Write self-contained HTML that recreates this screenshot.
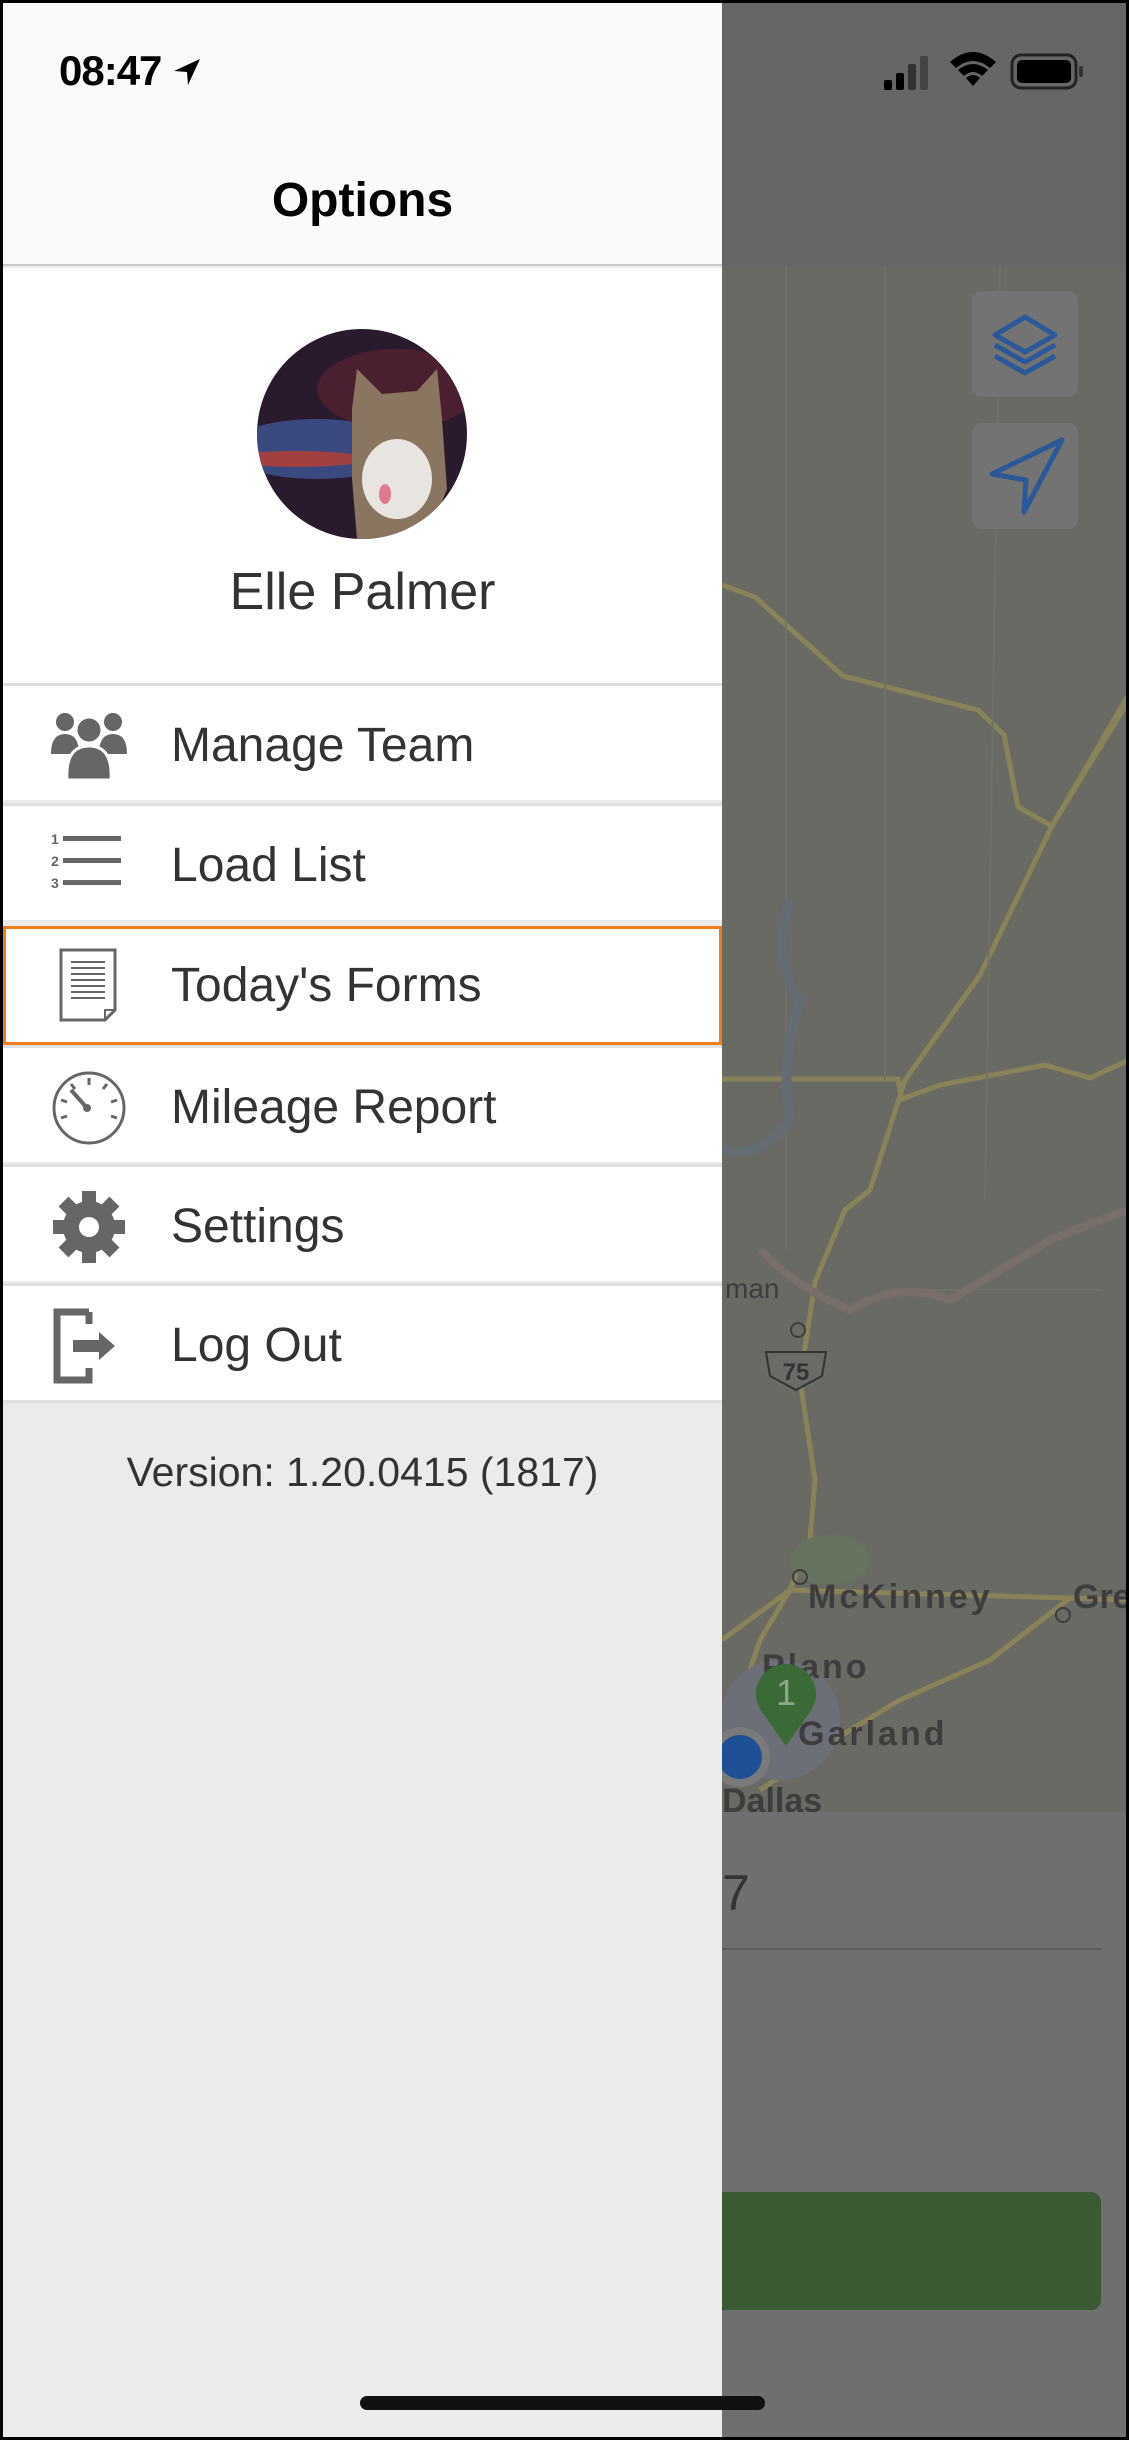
<!DOCTYPE html>
<html><head><meta charset="utf-8"><style>
*{margin:0;padding:0;box-sizing:border-box}
html,body{width:1129px;height:2440px;overflow:hidden;background:#000}
body{font-family:"Liberation Sans",sans-serif;position:relative}
.frame{position:absolute;left:3px;top:3px;width:1123px;height:2434px;overflow:hidden;background:#696a64}
.map{position:absolute;left:0;top:0;width:1126px;height:2440px}
.drawer{position:absolute;left:0;top:0;width:719px;height:2440px;background:#ebebeb}
.hdr{position:absolute;left:0;top:0;width:719px;height:263px;background:#fafafa;border-bottom:2px solid #c8c8c8}
.time{position:absolute;left:56px;top:44px;font-size:42px;font-weight:bold;color:#000;letter-spacing:-1px}
.title{position:absolute;left:0;width:719px;top:170px;text-align:center;font-size:48px;font-weight:bold;color:#000}
.prof{position:absolute;left:0;top:265px;width:719px;height:415px;background:#fff}
.name{position:absolute;left:0;width:719px;top:294px;text-align:center;font-size:52px;color:#333}
.row{position:absolute;left:0;width:719px;height:117px;background:#fff;border-top:3px solid #e0e0e0}
.row .t{position:absolute;left:168px;top:32px;font-size:48px;color:#333}
.row svg{position:absolute;left:46px;top:22px}
.sel{border:3px solid #f07d1e}
.ver{position:absolute;left:0;width:719px;top:1446px;text-align:center;font-size:41px;color:#333}
</style></head><body><div class="frame">
<svg class="map" viewBox="0 0 1126 2440" style="left:-3px;top:-3px">
<rect x="0" y="0" width="1126" height="266" fill="#666"/>
<g fill="none" stroke="#8a8258" stroke-width="5">
<path d="M722 585 L755 597 L843 676 L978 710 L1004 735 L1018 807 L1052 826 L1129 694"/>
<path d="M1129 700 L1052 826 L980 975 L905 1080 L870 1190 L845 1210 L815 1282 L800 1380 L815 1480 L810 1540 L790 1590 L760 1640 L740 1700"/>
<path d="M722 1079 L898 1079 L902 1099 L940 1085 L1045 1065 L1090 1078 L1129 1060"/>
<path d="M722 1640 L790 1590 L1070 1598 L1129 1600"/>
<path d="M1070 1598 L990 1660 L900 1700 L850 1730 L760 1790"/>
</g>
<g fill="none" stroke="#6f7168" stroke-width="2">
<path d="M786 266 L786 1250"/><path d="M885 266 L885 1080"/><path d="M1000 266 L985 1200"/>
<path d="M920 1290 L1100 1290"/>
</g>
<path d="M760 1250 Q800 1290 850 1310 Q900 1280 950 1300 Q1000 1270 1050 1240 Q1100 1220 1129 1210" fill="none" stroke="#7a6e6a" stroke-width="8"/>
<path d="M722 1150 Q760 1160 790 1120 Q780 1060 800 1000 Q770 960 790 900" fill="none" stroke="#646c74" stroke-width="10"/>
<ellipse cx="830" cy="1560" rx="40" ry="25" fill="#66735e"/>
<ellipse cx="780" cy="1720" rx="60" ry="60" fill="#6c6f78"/>
<g font-family="Liberation Sans" font-weight="bold" fill="#3d3d3d" font-size="34">
<text x="725" y="1298" font-size="28" font-weight="normal">man</text>
<text x="808" y="1608" letter-spacing="3">McKinney</text>
<text x="1073" y="1608">Gre</text>
<text x="762" y="1678" letter-spacing="3">Plano</text>
<text x="798" y="1745" letter-spacing="3">Garland</text>
<text x="722" y="1812">Dallas</text>
</g>
<circle cx="798" cy="1330" r="7" fill="none" stroke="#3d3d3d" stroke-width="2"/>
<circle cx="800" cy="1577" r="7" fill="none" stroke="#3d3d3d" stroke-width="2"/>
<circle cx="1063" cy="1615" r="7" fill="none" stroke="#3d3d3d" stroke-width="2"/>
<path d="M766 1352 h60 l-4 24 l-26 14 l-26-14 z" fill="#6a6a66" stroke="#333" stroke-width="2"/>
<text x="796" y="1380" text-anchor="middle" font-family="Liberation Sans" font-weight="bold" font-size="24" fill="#333">75</text>
<path d="M786 1746 L762 1712 A30 30 0 1 1 810 1712 Z" fill="#3a6a36"/>
<text x="786" y="1705" text-anchor="middle" font-family="Liberation Sans" font-size="36" fill="#8da88a">1</text>
<circle cx="740" cy="1757" r="30" fill="#7a7a7a"/><circle cx="740" cy="1757" r="22" fill="#1f4f94"/>
<rect x="722" y="1812" width="404" height="630" fill="#6f6f6f"/>
<text x="722" y="1910" font-family="Liberation Sans" font-size="50" fill="#333">7</text>
<rect x="722" y="1948" width="380" height="2" fill="#5c5c5c"/>
<rect x="700" y="2192" width="401" height="118" rx="10" fill="#3a5a34"/>
<rect x="972" y="291" width="106" height="106" rx="10" fill="#737373"/>
<rect x="972" y="423" width="106" height="106" rx="10" fill="#737373"/>
<g fill="none" stroke="#2b5899" stroke-width="5" stroke-linejoin="round">
<path d="M1025 317 L1055 335 L1025 352 L995 335 Z"/><path d="M995 345 L1025 362 L1055 345"/><path d="M995 356 L1025 373 L1055 356"/>
<path d="M1062 440 L992 474 L1026 480 L1024 512 Z"/>
</g>
<g fill="#000">
<rect x="884" y="80" width="8" height="10" rx="2"/><rect x="896" y="73" width="8" height="17" rx="2"/>
<rect x="908" y="64" width="8" height="26" rx="2" fill="#333"/><rect x="920" y="56" width="8" height="34" rx="2" fill="#444"/>
<path d="M950 62 Q973 42 996 62 L990 68 Q973 54 956 68 Z M958 70 Q973 58 988 70 L982 76 Q973 68 964 76 Z M966 78 Q973 72 980 78 L973 86 Z"/>
<rect x="1012" y="55" width="64" height="33" rx="9" fill="none" stroke="#222" stroke-width="3"/>
<rect x="1017" y="60" width="54" height="23" rx="5"/><rect x="1079" y="66" width="4" height="11" rx="2" fill="#333"/>
</g>
</svg>
<div class="drawer">
<div class="hdr">
<div class="time">08:47 <svg width="30" height="30" viewBox="0 0 30 30" style="vertical-align:-2px"><path d="M28 2 L2 14 L15 15 L16 28 Z" fill="#000"/></svg></div>
<div class="title">Options</div>
</div>
<div class="prof">
<svg style="position:absolute;left:254px;top:61px" width="210" height="210" viewBox="0 0 210 210">
<defs><clipPath id="c"><circle cx="105" cy="105" r="105"/></clipPath></defs>
<g clip-path="url(#c)">
<rect width="210" height="210" fill="#2a1a2e"/>
<ellipse cx="60" cy="120" rx="90" ry="30" fill="#3a4a80"/>
<ellipse cx="40" cy="130" rx="70" ry="8" fill="#a04040"/>
<ellipse cx="140" cy="60" rx="80" ry="40" fill="#4a2030"/>
<path d="M95 80 L100 40 L125 65 L160 62 L180 40 L185 90 L190 160 L170 210 L100 210 L95 150 Z" fill="#8a7560"/>
<ellipse cx="140" cy="150" rx="35" ry="40" fill="#e8e4e0"/>
<ellipse cx="128" cy="165" rx="6" ry="10" fill="#e07a90"/>
</g></svg>
<div class="name">Elle Palmer</div>
</div>
<div class="row" style="top:680px"><svg width="80" height="76" viewBox="0 0 80 76" fill="#666"><circle cx="16" cy="14" r="9"/><circle cx="64" cy="14" r="9"/><path d="M2 46 Q2 26 16 26 Q30 26 30 46 Z M50 46 Q50 26 64 26 Q78 26 78 46 Z"/><circle cx="40" cy="22" r="13" fill="#666" stroke="#fff" stroke-width="3"/><path d="M18 72 Q16 38 40 38 Q64 38 62 72 Z" stroke="#fff" stroke-width="3"/></svg><div class="t">Manage Team</div></div>
<div class="row" style="top:800px"><svg width="80" height="76" viewBox="0 0 80 76"><g font-family="Liberation Sans" font-weight="bold" font-size="14" fill="#666"><text x="2" y="16">1</text><text x="2" y="38">2</text><text x="2" y="60">3</text></g><g fill="#666"><rect x="14" y="8" width="58" height="5"/><rect x="14" y="30" width="58" height="5"/><rect x="14" y="52" width="58" height="5"/></g></svg><div class="t">Load List</div></div>
<div class="row sel" style="top:923px;height:119px"><svg width="80" height="76" viewBox="0 0 80 76" style="left:43px;top:19px"><path d="M12 2 H66 V62 L56 72 H12 Z" fill="#fff" stroke="#666" stroke-width="3"/><path d="M56 72 V62 H66" fill="none" stroke="#666" stroke-width="2"/><g stroke="#666" stroke-width="2"><path d="M22 14H56M22 20H56M22 26H56M22 32H56M22 38H56M22 44H56M22 50H56"/></g></svg><div class="t" style="left:165px;top:29px">Today's Forms</div></div>
<div class="row" style="top:1042px"><svg width="80" height="76" viewBox="0 0 80 76"><circle cx="40" cy="38" r="35" fill="none" stroke="#666" stroke-width="3"/><g stroke="#666" stroke-width="3"><path d="M40 8v7M22 14l4 5M58 14l-4 5M12 30l6 2M68 30l-6 2M12 48l6-2M68 48l-6-2"/><path d="M22 20 L38 38" stroke-width="4"/></g><circle cx="38" cy="38" r="4" fill="#666"/></svg><div class="t">Mileage Report</div></div>
<div class="row" style="top:1161px"><svg width="80" height="76" viewBox="0 0 80 76"><g transform="translate(40 38)" fill="#666"><g id="t"><rect x="-7" y="-36" width="14" height="72"/></g><use href="#t" transform="rotate(45)"/><use href="#t" transform="rotate(90)"/><use href="#t" transform="rotate(135)"/><circle r="26"/><circle r="10" fill="#fff"/></g></svg><div class="t">Settings</div></div>
<div class="row" style="top:1280px"><svg width="80" height="76" viewBox="0 0 80 76"><path d="M40 4 H8 V72 H40 V60" fill="none" stroke="#666" stroke-width="7"/><path d="M40 4 V16" stroke="#666" stroke-width="7"/><rect x="24" y="32" width="28" height="12" fill="#666"/><path d="M50 24 L66 38 L50 52 Z" fill="#666"/></svg><div class="t">Log Out</div></div>
<div style="position:absolute;left:0;top:1397px;width:719px;height:3px;background:#e0e0e0"></div>
<div class="ver">Version: 1.20.0415 (1817)</div>
</div>
<div style="position:absolute;left:357px;top:2393px;width:405px;height:14px;border-radius:7px;background:#111"></div>
</div></body></html>
